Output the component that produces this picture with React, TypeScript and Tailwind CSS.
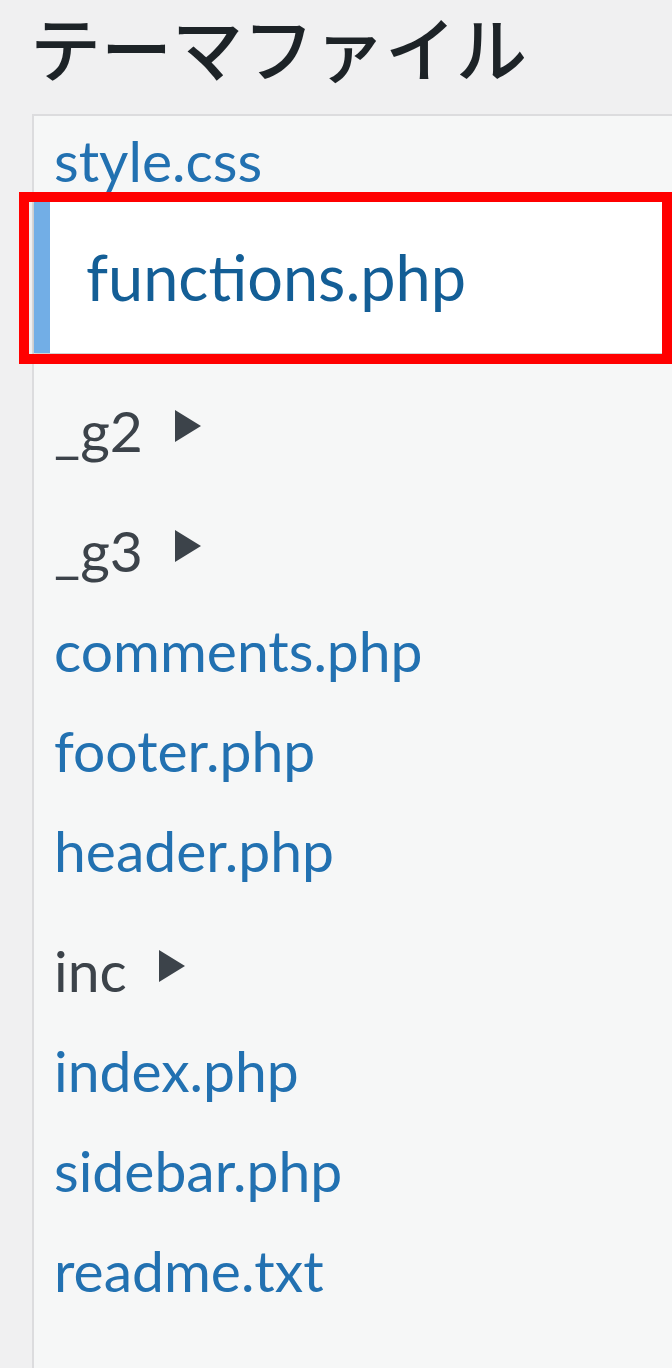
import React from 'react'

type Entry =
  | { kind: 'file'; name: string; current?: boolean }
  | { kind: 'folder'; name: string }

const entries: Entry[] = [
  { kind: 'file', name: 'style.css' },
  { kind: 'file', name: 'functions.php', current: true },
  { kind: 'folder', name: '_g2' },
  { kind: 'folder', name: '_g3' },
  { kind: 'file', name: 'comments.php' },
  { kind: 'file', name: 'footer.php' },
  { kind: 'file', name: 'header.php' },
  { kind: 'folder', name: 'inc' },
  { kind: 'file', name: 'index.php' },
  { kind: 'file', name: 'sidebar.php' },
  { kind: 'file', name: 'readme.txt' },
]

function Caret() {
  return (
    <svg className="w-[26px] h-[32px] ml-[32px] mb-[8px] flex-shrink-0" viewBox="0 0 26 32">
      <polygon points="0,0 26,16 0,32" fill="#3c434a" />
    </svg>
  )
}

function Row({ entry, first }: { entry: Entry; first: boolean }) {
  if (entry.kind === 'folder') {
    return (
      <div className="mt-[20px] h-[100px] pl-[20px] pt-[14px] flex items-center">
        <span className="text-[57px] leading-none text-[#3c434a]">{entry.name}</span>
        <Caret />
      </div>
    )
  }

  if (entry.current) {
    return (
      <div className="mt-[11px] mb-[5px] h-[152px] flex bg-white shadow-[0_2px_3px_rgba(0,0,0,0.18)]">
        <div className="w-[16px] bg-[#72aee6]" />
        <div className="flex-1 flex items-center pl-[36px] pb-[2px]">
          <a className="text-[63px] leading-none text-[#135e96]">{entry.name}</a>
        </div>
      </div>
    )
  }

  return (
    <div className={`${first ? 'h-[74px]' : 'h-[100px]'} pl-[20px] pt-[14px] flex items-center`}>
      <a className="text-[57px] leading-none text-[#2271b1]">{entry.name}</a>
    </div>
  )
}

export default function App() {
  return (
    <div className="relative min-h-screen flex flex-col bg-[#f0f0f1] pl-[32px] font-['Lato','Noto_Sans_CJK_JP',sans-serif] overflow-hidden">
      {/* Heading */}
      <h2 className="pt-[3px] -ml-[2px] text-[71px] leading-[85px] font-medium text-[#1d2327] font-['Noto_Sans_CJK_JP',sans-serif]">
        テーマファイル
      </h2>

      {/* File list */}
      <div className="mt-[26px] flex-1 bg-[#f6f7f7] border-l-2 border-t-2 border-[#dcdcde]">
        {entries.map((entry, i) => (
          <Row key={entry.name} entry={entry} first={i === 0} />
        ))}
      </div>

      {/* Annotation box */}
      <div className="absolute left-[19px] top-[192px] right-0 h-[172px] border-[10px] border-[#ff0000] pointer-events-none" />
    </div>
  )
}
